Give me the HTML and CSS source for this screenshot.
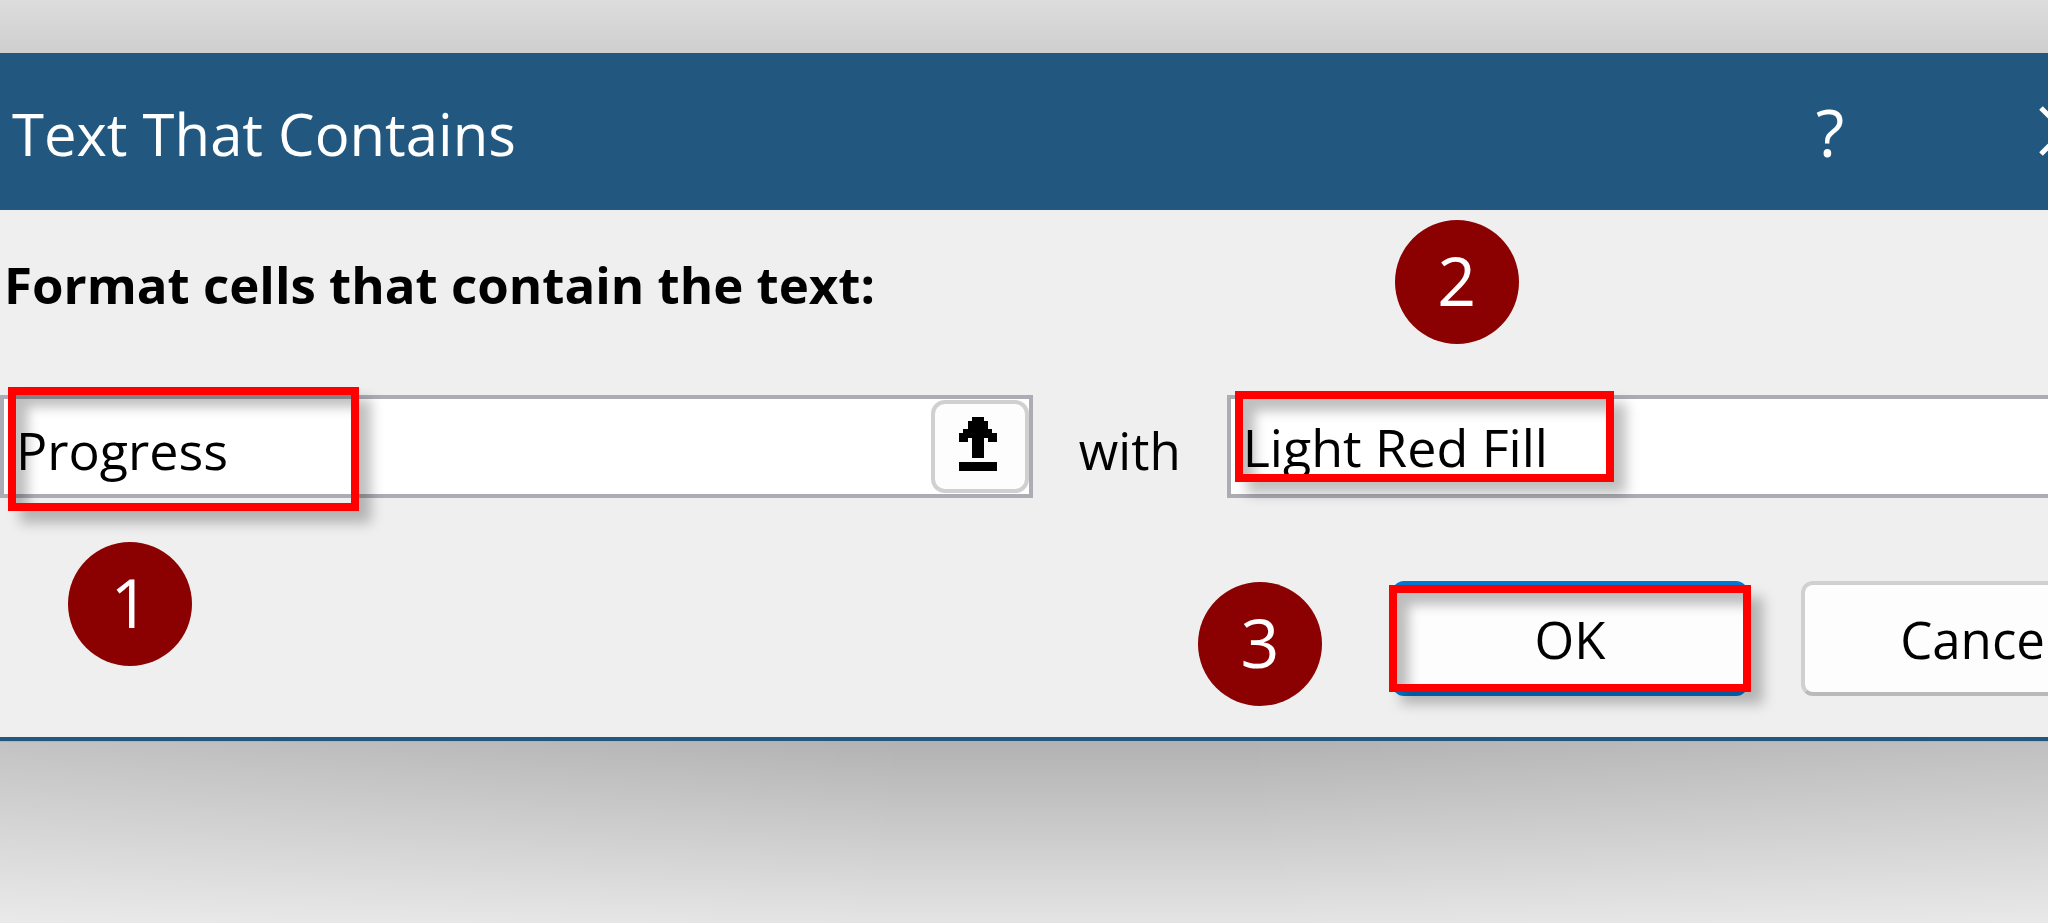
FILE: index.html
```html
<!DOCTYPE html>
<html lang="en">
<head>
    <meta charset="utf-8">
    <title>Text That Contains</title>
    <link rel="stylesheet" href="styles.css">
</head>
<body>
    <div class="dialog">
        <div class="title-bar">
            <h1 class="title">Text That Contains</h1>
            <button type="button" class="title-button">?</button>
            <button type="button" class="title-button" aria-label="Close">
                <svg width="50" height="50" viewBox="0 0 50 50">
                    <path d="M2 2L48 48M48 2L2 48" stroke="#fff" stroke-width="5" fill="none"/>
                </svg>
            </button>
        </div>

        <form class="content">
            <label class="heading" for="containsText">Format cells that contain the text:</label>

            <div class="fields">
                <div class="field text-field">
                    <input type="text" id="containsText" value="Progress">
                    <button type="button" class="range-button" aria-label="Select range">
                        <svg width="38" height="54" viewBox="0 0 38 54">
                            <path d="M13 0H25V4H29V12H33V16H38V25H29V21H25V41H13V21H9V25H0V16H4V12H9V4H13ZM0 45H38V54H0Z"/>
                        </svg>
                    </button>
                    <span class="outline outline-text"></span>
                    <span class="badge badge-one">1</span>
                </div>
                <label class="with" for="formatStyle">with</label>
                <div class="field format-field">
                    <select id="formatStyle">
                        <option>Light Red Fill</option>
                    </select>
                    <span class="outline outline-format"></span>
                    <span class="badge badge-two">2</span>
                </div>
            </div>

            <div class="actions">
                <div class="action">
                    <button type="button" class="button primary">OK</button>
                    <span class="outline outline-ok"></span>
                    <span class="badge badge-three">3</span>
                </div>
                <button type="button" class="button">Cancel</button>
            </div>
        </form>
    </div>
</body>
</html>
```
FILE: styles.css
```css
* {
    box-sizing: border-box;
}

body {
    margin: 0;
    padding-top: 53px;
    min-height: 100vh;
    overflow: hidden;
    font-family: "Open Sans", "Noto Sans", sans-serif;
    font-size: 51px;
    color: #000;
    background:
        linear-gradient(to right, rgba(255, 255, 255, 0.22), rgba(255, 255, 255, 0) 45%, rgba(255, 255, 255, 0) 60%, rgba(255, 255, 255, 0.18)) bottom / 100% 181px no-repeat,
        linear-gradient(#dddddd, #cecece 53px, #b2b2b2 742px, #e4e4e4 923px);
}

/* the dialog runs past the right edge of the window */
.dialog {
    width: calc(100% + 140px);
    background: #efefef;
    border-bottom: 4px solid #22587f;
}

.title-bar {
    display: flex;
    align-items: center;
    height: 157px;
    padding: 0 7px 0 12px;
    background: #22587f;
    color: #fff;
}

.title {
    flex: 1;
    margin: 0;
    padding-top: 3px;
    font-size: 58px;
    font-weight: 400;
}

.title-button {
    display: flex;
    align-items: center;
    justify-content: center;
    width: 234px;
    height: 100%;
    padding: 0 0 2px;
    border: none;
    background: none;
    color: #fff;
    font-family: inherit;
    font-size: 66px;
}

.content {
    padding: 34px 31px 41px 0;
}

.heading {
    display: block;
    margin-bottom: 71px;
    padding-left: 4px;
    font-size: 51px;
    font-weight: 700;
    line-height: 80px;
}

.fields {
    display: flex;
    align-items: center;
    gap: 46px;
    margin-bottom: 83px;
}

.field {
    position: relative;
    display: flex;
    height: 103px;
    background: #fff;
    border: 4px solid #acacb4;
    font-size: 52px;
}

.text-field {
    flex: 10 1 0;
}

.format-field {
    flex: 9 1 0;
}

.field input,
.field select {
    flex: 1;
    min-width: 0;
    padding: 0 12px;
    border: none;
    outline: none;
    background: none;
    color: #000;
    font: inherit;
    appearance: none;
}

.field input {
    padding-top: 6px;
}

.with {
    padding-top: 6px;
}

.range-button {
    display: flex;
    align-items: center;
    justify-content: center;
    width: 98px;
    margin: 1px 0;
    padding: 0 4px 6px 0;
    border: 4px solid #d0d0d0;
    border-radius: 14px;
    background: #fdfdfd;
}

.actions {
    display: flex;
    justify-content: flex-end;
    gap: 53px;
}

.action {
    position: relative;
}

.button {
    display: block;
    width: 356px;
    height: 115px;
    padding: 0;
    border: 4px solid #d0d0d0;
    border-bottom-color: #bababa;
    border-radius: 12px;
    background: #fdfdfd;
    color: #000;
    font: inherit;
}

.primary {
    border-color: #0078d4;
}

/* numbered callouts */
.outline {
    position: absolute;
    border: 8px solid #f00;
    box-shadow: 12px 12px 12px rgba(0, 0, 0, 0.25), inset 12px 12px 12px rgba(0, 0, 0, 0.25);
    pointer-events: none;
}

.outline-text {
    left: 4px;
    top: -12px;
    width: 351px;
    height: 124px;
}

.outline-format {
    left: 4px;
    top: -8px;
    width: 379px;
    height: 91px;
}

.outline-ok {
    left: -3px;
    top: 4px;
    width: 362px;
    height: 107px;
}

.badge {
    position: absolute;
    width: 124px;
    height: 124px;
    border-radius: 50%;
    background: #8b0000;
    color: #fff;
    font-size: 68px;
    line-height: 120px;
    text-align: center;
}

.badge-one {
    left: 64px;
    top: 143px;
}

.badge-two {
    left: 164px;
    top: -179px;
}

.badge-three {
    left: -194px;
    top: 1px;
}
```
